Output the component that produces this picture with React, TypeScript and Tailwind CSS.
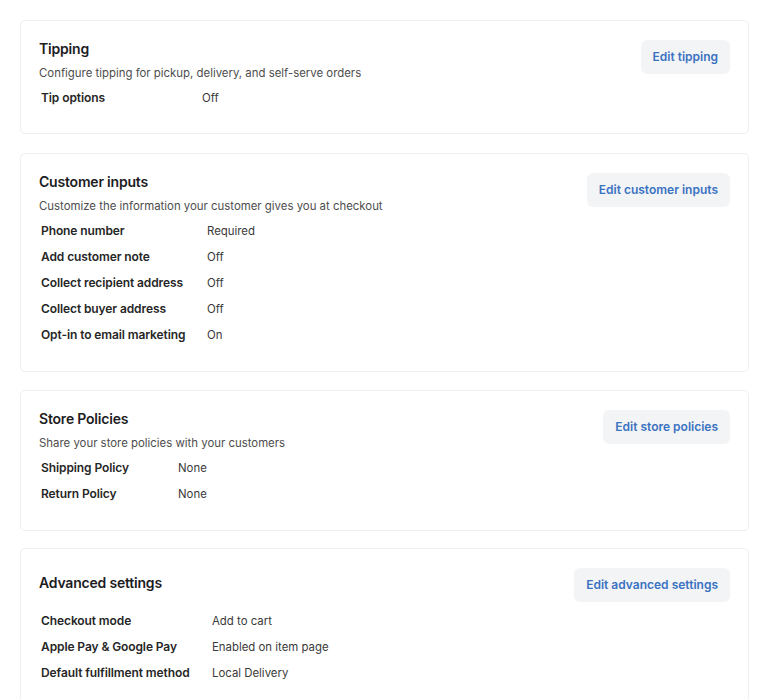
import React from "react";

type Row = { label: string; value: string };

interface SettingsCardProps {
  title: string;
  description?: string;
  action: string;
  labelWidth: string;
  rows: Row[];
  extra?: string;
}

function SettingsCard({ title, description, action, labelWidth, rows, extra = "" }: SettingsCardProps) {
  return (
    <section className={`rounded-[5px] border border-[#efefef] bg-white pt-[18px] px-[18px] pb-[23px] ${extra}`}>
      {/* Header */}
      <div className="flex items-start justify-between">
        <div className={description ? "" : "mt-[6px]"}>
          <h3 className="text-[14px] leading-5 font-semibold text-[#1d1d1f] tracking-[-0.2px]">{title}</h3>
          {description && (
            <p className="mt-[5px] text-[11.4px] leading-[18px] text-[#4d4d4d]">{description}</p>
          )}
        </div>
        <button className="mt-px h-[34px] px-3 rounded-md bg-[#f3f4f5] text-[12px] font-semibold text-[#3a72c2]">
          {action}
        </button>
      </div>

      {/* Rows */}
      <div className={description ? "mt-[3px]" : "mt-[6px]"}>
        {rows.map((r) => (
          <div key={r.label} className="flex items-center h-[26px] pl-[2px] leading-[18px]">
            <span className={`${labelWidth} shrink-0 text-[12px] font-semibold text-[#262626] tracking-[-0.1px]`}>
              {r.label}
            </span>
            <span className="text-[11.4px] text-[#3a3a3a]">{r.value}</span>
          </div>
        ))}
      </div>
    </section>
  );
}

export default function App() {
  return (
    <div
      className="min-h-screen bg-white px-[20px] pt-[20px] flex flex-col w-[769px]"
      style={{ fontFamily: "Inter, 'Noto Sans', sans-serif" }}
    >
      <SettingsCard
        title="Tipping"
        description="Configure tipping for pickup, delivery, and self-serve orders"
        action="Edit tipping"
        labelWidth="w-[161px]"
        extra="!pb-[22px]"
        rows={[{ label: "Tip options", value: "Off" }]}
      />
      <SettingsCard
        title="Customer inputs"
        description="Customize the information your customer gives you at checkout"
        action="Edit customer inputs"
        labelWidth="w-[166px]"
        extra="mt-[19px]"
        rows={[
          { label: "Phone number", value: "Required" },
          { label: "Add customer note", value: "Off" },
          { label: "Collect recipient address", value: "Off" },
          { label: "Collect buyer address", value: "Off" },
          { label: "Opt-in to email marketing", value: "On" },
        ]}
      />
      <SettingsCard
        title="Store Policies"
        description="Share your store policies with your customers"
        action="Edit store policies"
        labelWidth="w-[137px]"
        extra="mt-[18px]"
        rows={[
          { label: "Shipping Policy", value: "None" },
          { label: "Return Policy", value: "None" },
        ]}
      />
      <SettingsCard
        title="Advanced settings"
        action="Edit advanced settings"
        labelWidth="w-[171px]"
        extra="mt-[17px]"
        rows={[
          { label: "Checkout mode", value: "Add to cart" },
          { label: "Apple Pay & Google Pay", value: "Enabled on item page" },
          { label: "Default fulfillment method", value: "Local Delivery" },
        ]}
      />
    </div>
  );
}
